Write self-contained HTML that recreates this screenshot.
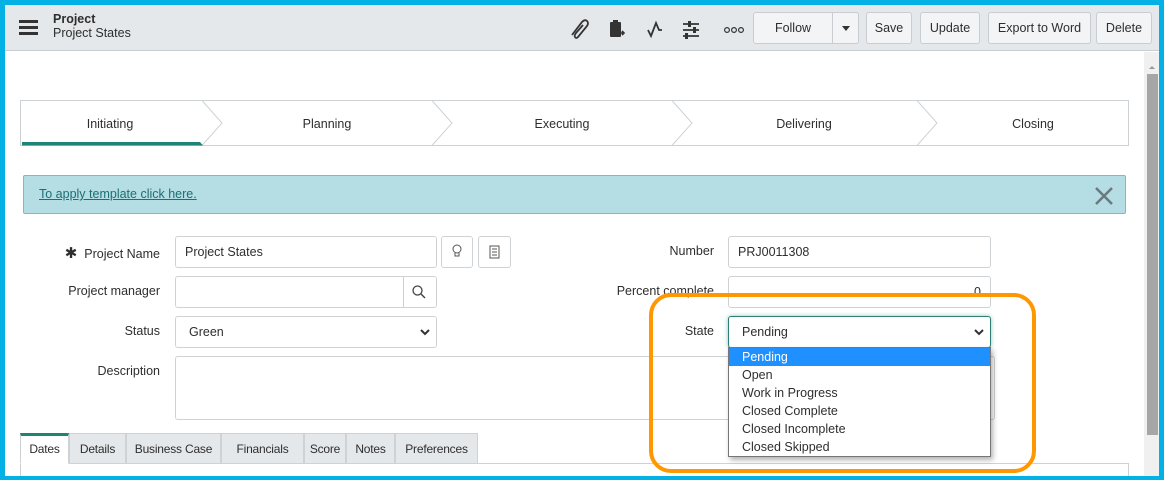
<!DOCTYPE html>
<html><head><meta charset="utf-8"><style>
*{box-sizing:border-box;margin:0;padding:0}
body{width:1164px;height:480px;overflow:hidden;background:#03b1e4;font-family:"Liberation Sans",sans-serif;font-size:12.5px;color:#2e2e2e;position:relative}
.frame{position:absolute;left:5px;top:5px;width:1154px;height:471px;background:#fff;overflow:hidden}
.hdr{position:absolute;left:0;top:0;width:1154px;height:46px;background:#e4e8eb;border-bottom:1px solid #c8cdd1}
.abs{position:absolute}
.btn{position:absolute;top:7px;height:32px;border:1px solid #c9ccd0;border-radius:3px;background:#f3f4f5;font-size:12.5px;line-height:30px;text-align:center;color:#2e2e2e}
.lbl{position:absolute;text-align:right;font-size:12.5px;color:#2e2e2e}
.inp{position:absolute;height:32px;border:1px solid #cfd2d5;border-radius:3px;background:#fff;line-height:30px;padding-left:9px}
.tab{position:absolute;top:428px;height:31px;background:#e5e8eb;border:1px solid #cfd2d5;line-height:30px;text-align:center;font-size:12px;letter-spacing:-0.2px}
.opt{height:18px;line-height:18px;padding-left:13px}
</style></head><body>
<div class="frame">
<div class="hdr">
 <div class="abs" style="left:14px;top:15px;width:19px;height:3px;background:#333;box-shadow:0 6px 0 #333,0 12px 0 #333"></div>
 <div class="abs" style="left:48px;top:7px;font-size:12.5px;font-weight:bold;line-height:14px">Project</div>
 <div class="abs" style="left:48px;top:21px;font-size:12.5px;line-height:14px">Project States</div>
 <svg class="abs" style="left:564px;top:10px" width="190" height="28" viewBox="0 0 190 28">
  <path d="M3 20 L13 7 Q16 4 18 6 Q20 8 18 11 L9 22 Q7 24 6 22 Q5 21 7 18 L14 10" fill="none" stroke="#333" stroke-width="1.8"/>
  <rect x="41" y="7" width="11" height="15" rx="1" fill="#333"/><rect x="44" y="5" width="5" height="4" fill="#333"/><path d="M50 18h5m-2-2l2 2-2 2" stroke="#333" stroke-width="1.6" fill="none"/>
  <path d="M79 15l3 6 5-13 3 7h3" fill="none" stroke="#333" stroke-width="1.8"/>
  <path d="M114 9h16M114 15h16M114 21h16" stroke="#333" stroke-width="1.8"/><rect x="119" y="6" width="3" height="6" fill="#333"/><rect x="124" y="12" width="3" height="6" fill="#333"/><rect x="116" y="18" width="3" height="6" fill="#333"/>
  <circle cx="158" cy="15" r="2.4" fill="none" stroke="#333" stroke-width="1.2"/><circle cx="165" cy="15" r="2.4" fill="none" stroke="#333" stroke-width="1.2"/><circle cx="172" cy="15" r="2.4" fill="none" stroke="#333" stroke-width="1.2"/>
 </svg>
 <div class="btn" style="left:748px;width:106px;text-align:left"><span style="display:inline-block;width:79px;text-align:center;border-right:1px solid #c9ccd0">Follow</span><span style="position:absolute;left:88px;top:13px;border:4px solid transparent;border-top:5px solid #333"></span></div>
 <div class="btn" style="left:861px;width:46px">Save</div>
 <div class="btn" style="left:915px;width:60px">Update</div>
 <div class="btn" style="left:983px;width:103px">Export to Word</div>
 <div class="btn" style="left:1091px;width:56px">Delete</div>
</div>
<div class="abs" style="left:1139px;top:47px;width:15px;height:424px;background:#f0f0f0"></div>
<div class="abs" style="left:1142px;top:69px;width:11px;height:361px;background:#a6a6a6"></div>
<div class="abs" style="left:1144px;top:61px;border:3px solid transparent;border-bottom:3px solid #999;border-top:0"></div>
<svg class="abs" style="left:15px;top:95px" width="1110" height="47">
 <rect x="0.5" y="0.5" width="1108" height="45" fill="#fff" stroke="#cfd2d5"/>
 <path d="M182 0.5 L202 23 L182 45.5 M412 0.5 L432 23 L412 45.5 M652 0.5 L672 23 L652 45.5 M897 0.5 L917 23 L897 45.5" fill="none" stroke="#cfd2d5"/>
 <path d="M2 42 H180 L183 45.5 H2 Z" fill="#1f8476"/>
 <g font-family="Liberation Sans" font-size="12.5" fill="#2e2e2e" text-anchor="middle">
  <text x="90" y="28">Initiating</text><text x="307" y="28">Planning</text><text x="542" y="28">Executing</text><text x="784" y="28">Delivering</text><text x="1013" y="28">Closing</text>
 </g>
</svg>
<div class="abs" style="left:18px;top:170px;width:1103px;height:39px;background:#b4dde4;border:1px solid #6ebfcf;border-radius:2px"></div>
<div class="abs" style="left:34px;top:182px;color:#1e6f73;text-decoration:underline;font-size:12.5px">To apply template click here.</div>
<svg class="abs" style="left:1089px;top:181px" width="20" height="20"><path d="M2 2L18 18M18 2L2 18" stroke="#6a7a7d" stroke-width="2.5"/></svg>
<div class="lbl" style="left:40px;top:239px;width:115px"><span style="font-size:15px">✱</span>&nbsp; Project Name</div>
<div class="inp" style="left:170px;top:231px;width:262px">Project States</div>
<div class="inp" style="left:436px;top:231px;width:32px;padding:0"><svg width="30" height="30"><circle cx="15" cy="12" r="4" fill="none" stroke="#555"/><path d="M13 16v3h4v-3" fill="none" stroke="#555"/></svg></div>
<div class="inp" style="left:473px;top:231px;width:33px;padding:0"><svg width="31" height="30"><rect x="11" y="9" width="9" height="12" fill="none" stroke="#555"/><path d="M13 12h5M13 15h5M13 18h5" stroke="#555"/></svg></div>
<div class="lbl" style="left:20px;top:279px;width:135px">Project manager</div>
<div class="inp" style="left:170px;top:271px;width:262px"></div>
<div class="abs" style="left:398px;top:272px;width:1px;height:30px;background:#cfd2d5"></div>
<svg class="abs" style="left:406px;top:279px" width="16" height="16"><circle cx="6.5" cy="6.5" r="4.5" fill="none" stroke="#444" stroke-width="1.3"/><path d="M10 10l4 4" stroke="#444" stroke-width="1.5"/></svg>
<div class="lbl" style="left:20px;top:319px;width:135px">Status</div>
<div class="inp" style="left:170px;top:311px;width:262px;padding-left:13px">Green<svg style="position:absolute;right:6px;top:11px" width="10" height="8"><path d="M1 2l4 4 4-4" fill="none" stroke="#333" stroke-width="2"/></svg></div>
<div class="lbl" style="left:20px;top:359px;width:135px">Description</div>
<div class="abs" style="left:170px;top:351px;width:820px;height:64px;border:1px solid #cfd2d5;border-radius:3px"></div>
<div class="lbl" style="left:560px;top:239px;width:149px">Number</div>
<div class="inp" style="left:723px;top:231px;width:263px">PRJ0011308</div>
<div class="lbl" style="left:560px;top:279px;width:149px">Percent complete</div>
<div class="inp" style="left:723px;top:271px;width:263px;text-align:right;padding-right:9px">0</div>
<div class="lbl" style="left:560px;top:319px;width:149px">State</div>
<div class="inp" style="left:723px;top:311px;width:263px;border-color:#2e7e74;box-shadow:0 0 5px #8fc9c0;padding-left:13px">Pending<svg style="position:absolute;right:6px;top:11px" width="10" height="8"><path d="M1 2l4 4 4-4" fill="none" stroke="#333" stroke-width="2"/></svg></div>
<div class="abs" style="left:15px;top:458px;width:1109px;height:20px;border:1px solid #cfd2d5;border-bottom:0"></div>
<div class="tab" style="left:15px;width:49px;background:#fff;border-top:3px solid #1f8476;border-bottom-color:#fff;line-height:27px">Dates</div>
<div class="tab" style="left:64px;width:57px">Details</div>
<div class="tab" style="left:121px;width:95px">Business Case</div>
<div class="tab" style="left:216px;width:83px">Financials</div>
<div class="tab" style="left:299px;width:42px">Score</div>
<div class="tab" style="left:341px;width:49px">Notes</div>
<div class="tab" style="left:390px;width:83px">Preferences</div>
<div class="abs" style="left:723px;top:342px;width:263px;height:110px;background:#fff;border:1px solid #767676;box-shadow:2px 3px 5px rgba(0,0,0,.3)">
 <div class="opt" style="background:#1e90ff;color:#fff">Pending</div>
 <div class="opt">Open</div><div class="opt">Work in Progress</div><div class="opt">Closed Complete</div><div class="opt">Closed Incomplete</div><div class="opt">Closed Skipped</div>
</div>
<div class="abs" style="left:644px;top:288px;width:387px;height:180px;border:4px solid #ff9800;border-radius:22px"></div>
</div>
</body></html>
